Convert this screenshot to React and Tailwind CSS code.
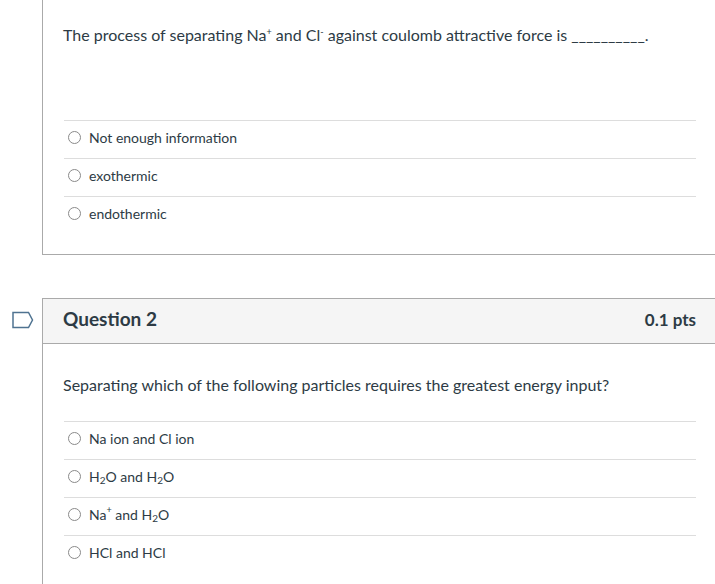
import React from "react";

const font = { fontFamily: "Lato, 'Noto Sans', sans-serif" };

function Radio() {
    return <span className="inline-block w-[13px] h-[13px] rounded-full border border-[#8a8a8a] bg-white shrink-0" />;
}

function Option({ children }) {
    return (
        <div className="h-[38px] border-t border-[#dddddd] flex items-center pl-[4px] pb-[5px] gap-[8px] text-[14px] text-[#2d3b45]">
            <Radio />
            <span>{children}</span>
        </div>
    );
}

function Bookmark() {
    return (
        <svg width="22" height="18" viewBox="0 0 22 18" className="block">
            <path d="M1 1.5 H16.5 L20.5 9 L16.5 16.5 H1 Z" fill="none" stroke="#4f7391" strokeWidth="1.5" />
        </svg>
    );
}

export default function App() {
    return (
        <div className="w-[715px] h-[584px] overflow-hidden bg-white text-[#2d3b45]" style={font}>
            {/* Question 1 (scrolled, top cut off) */}
            <div className="ml-[42px] w-[700px] border-l border-b border-[#aaaaaa] pl-[20px] pr-[46px] pt-[23px] pb-[20px]">
                <p className="text-[16px] leading-[24px] h-[97px]">
                    The process of separating Na<sup className="text-[9px] top-[-0.7em]">+</sup> and Cl<sup className="text-[9px] top-[-0.7em]">-</sup> against coulomb attractive force is __________.
                </p>
                <div className="ml-[1px]">
                    <Option>Not enough information</Option>
                    <Option>exothermic</Option>
                    <Option>endothermic</Option>
                </div>
            </div>

            {/* Question 2 */}
            <div className="flex mt-[43px]">
                <div className="w-[42px] shrink-0 pt-[13px] pl-[12px]">
                    <Bookmark />
                </div>
                <div className="w-[700px] border-l border-[#aaaaaa] shrink-0">
                    <div className="h-[46px] bg-[#f5f5f5] border-t border-b border-[#aaaaaa] flex items-center justify-between pl-[20px] pr-[46px] pb-[3px]">
                        <span className="text-[19px] font-bold text-[#2d3b45]">Question 2</span>
                        <span className="text-[17px] font-bold text-[#2d3b45]">0.1 pts</span>
                    </div>
                    <div className="pl-[20px] pr-[46px] pt-[29px] pb-[20px]">
                        <p className="text-[16px] leading-[24px] h-[48px]">
                            Separating which of the following particles requires the greatest energy input?
                        </p>
                        <div className="ml-[1px]">
                            <Option>Na ion and Cl ion</Option>
                            <Option>H<sub className="text-[10px]">2</sub>O and H<sub className="text-[10px]">2</sub>O</Option>
                            <Option>Na<sup className="text-[9px] top-[-0.7em]">+</sup> and H<sub className="text-[10px]">2</sub>O</Option>
                            <Option>HCl and HCl</Option>
                        </div>
                    </div>
                </div>
            </div>
        </div>
    );
}
